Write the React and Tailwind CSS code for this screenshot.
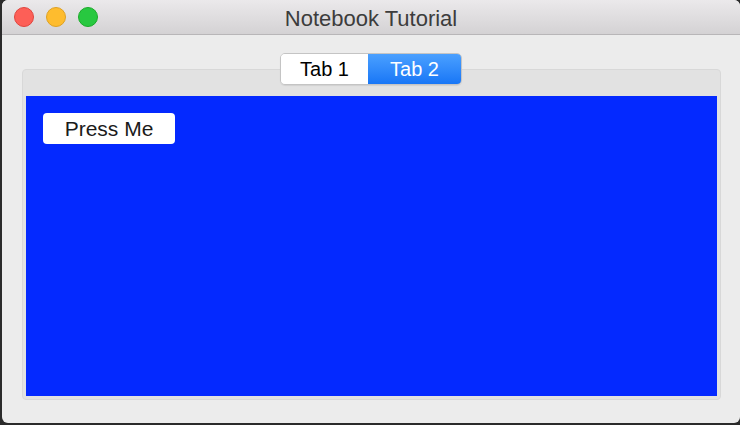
import React from "react";

export default function App() {
  const font = { fontFamily: '"Liberation Sans", Arial, sans-serif' };
  return (
    <div className="w-[740px] h-[425px] bg-[#2b2b2b] overflow-hidden" style={font}>
      <div className="ml-[2px] w-[738px] h-[423px] rounded-[6px] overflow-hidden bg-[#ececec] flex flex-col">
        {/* title bar */}
        <div className="h-[35px] shrink-0 bg-gradient-to-b from-[#ebe9eb] to-[#d4d2d4] border-b border-[#b8b6b8] flex items-center relative">
          <div className="flex items-center gap-[12px] pl-[12px]">
            <div className="w-[20px] h-[20px] rounded-full bg-[#fd5f57] border border-[#e0443e]" />
            <div className="w-[20px] h-[20px] rounded-full bg-[#febc2e] border border-[#dea123]" />
            <div className="w-[20px] h-[20px] rounded-full bg-[#28c840] border border-[#1aab29]" />
          </div>
          <div className="absolute inset-0 flex items-center justify-center pt-[2px] text-[22px] text-[#3c3c3c] pointer-events-none">
            Notebook Tutorial
          </div>
        </div>
        {/* body */}
        <div className="flex flex-col items-center pt-[18px]">
          <div className="relative z-10 flex h-[32px] rounded-[5px] border border-[#c4c4c4] overflow-hidden shadow-[0_1px_1px_rgba(0,0,0,0.08)]">
            <div className="w-[87px] bg-white flex items-center justify-center text-[20px] text-black">
              Tab 1
            </div>
            <div className="w-[93px] bg-gradient-to-b from-[#4aa0ff] to-[#1776f6] flex items-center justify-center text-[20px] text-white">
              Tab 2
            </div>
          </div>
          <div className="-mt-[16px] ml-[1px] w-[699px] h-[331px] rounded-[4px] bg-[#e2e2e2] border border-[#d8d8d8] pt-[26px] px-[3px] pb-[3px] flex flex-col">
            <div className="flex-1 bg-[#0429ff] p-[17px]">
              <div className="w-[132px] h-[31px] bg-white rounded-[4px] flex items-center justify-center text-[21px] text-[#1a1a1a]">
                Press Me
              </div>
            </div>
          </div>
        </div>
      </div>
    </div>
  );
}
